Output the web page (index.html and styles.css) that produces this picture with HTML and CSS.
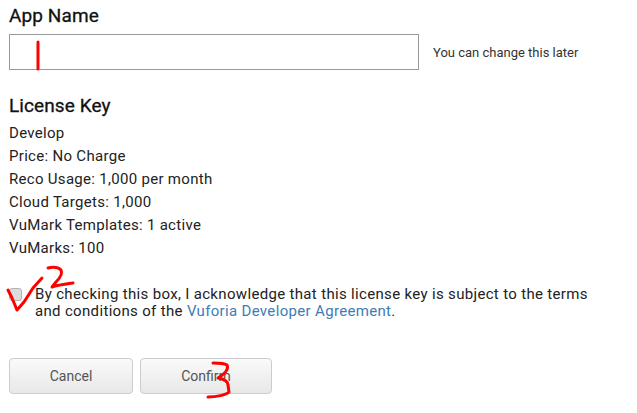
FILE: index.html
```html
<!DOCTYPE html>
<html lang="en">
<head>
    <meta charset="UTF-8">
    <title>Add License Key</title>
    <link rel="stylesheet" href="styles.css">
</head>
<body>
    <h2 class="first-title">App Name</h2>
    <div class="name-row">
        <input class="name-input" type="text">
        <span class="name-note">You can change this later</span>
    </div>

    <h2 class="key-title">License Key</h2>
    <ul class="key-list">
        <li>Develop</li>
        <li>Price: No Charge</li>
        <li>Reco Usage: 1,000 per month</li>
        <li>Cloud Targets: 1,000</li>
        <li>VuMark Templates: 1 active</li>
        <li>VuMarks: 100</li>
    </ul>

    <div class="agree-row">
        <span class="agree-box"></span>
        <p class="agree-text">By checking this box, I acknowledge that this license key is subject to the terms and conditions of the <a href="#">Vuforia Developer Agreement</a>.</p>
    </div>

    <div class="buttons">
        <button class="btn btn-cancel">Cancel</button>
        <button class="btn btn-confirm">Confirm</button>
    </div>

    <!-- Red pen marks drawn over the screenshot -->
    <svg class="marks" width="637" height="413" viewBox="0 0 637 413">
        <path d="M38 42 L38 69"/>
        <path d="M8 290 L12 298 L17 310 L24 302 L33 288 L42 278"/>
        <path d="M48 268 C52 267 58 267 61 270 C63 274 59 279 56 282 L52 287 C58 285 66 284 73 283"/>
        <path d="M213 363 C218 363 224 363 227 365 C229 369 226 373 218 378 C223 379 228 381 228 385 L229 392 C226 395 216 397 208 397"/>
    </svg>
</body>
</html>
```

FILE: styles.css
```css
* {
    margin: 0;
    padding: 0;
    box-sizing: border-box;
}
body {
    width: 637px;
    height: 413px;
    padding: 5px 0 0 9px;
    font-family: Roboto, "Liberation Sans", sans-serif;
    font-size: 15px;
    letter-spacing: 0.3px;
    color: #222;
    background-color: #fff;
    overflow: hidden;
    position: relative;
}
h2 {
    font-size: 19px;
    font-weight: 400;
    line-height: 22px;
    letter-spacing: 0.1px;
    color: #111;
    -webkit-text-stroke: 0.3px #111;
}
.name-row {
    display: flex;
    align-items: center;
    margin-top: 7px;
}
.name-input {
    width: 410px;
    height: 36px;
    border: 1px solid #999;
    background-color: #fff;
}
.name-note {
    margin-left: 14px;
    font-size: 13px;
    letter-spacing: 0;
    color: #333;
}
.key-title {
    margin-top: 25px;
}
.key-list {
    list-style: none;
    margin-top: 5px;
    line-height: 23px;
}
.agree-row {
    display: flex;
    margin-top: 26px;
    width: 600px;
}
.agree-box {
    flex: none;
    width: 13px;
    height: 13px;
    margin: 2px 13px 0 0;
    border: 1px solid #b5b5b5;
    border-radius: 3px;
    background-color: #dcdcdc;
}
.agree-text {
    line-height: 17px;
    letter-spacing: 0.33px;
}
.agree-text a {
    color: #3f7cb5;
    text-decoration: none;
}
.buttons {
    display: flex;
    gap: 7px;
    margin-top: 38px;
}
.btn {
    height: 36px;
    border: 1px solid #ccc;
    border-radius: 4px;
    background: linear-gradient(#fafafa, #e8e8e8);
    font-family: inherit;
    font-size: 14px;
    color: #555;
}
.btn-cancel {
    width: 124px;
}
.btn-confirm {
    width: 132px;
}
.marks {
    position: absolute;
    left: 0;
    top: 0;
    pointer-events: none;
}
.marks path {
    fill: none;
    stroke: #f00;
    stroke-width: 3;
    stroke-linecap: round;
    stroke-linejoin: round;
}
```
